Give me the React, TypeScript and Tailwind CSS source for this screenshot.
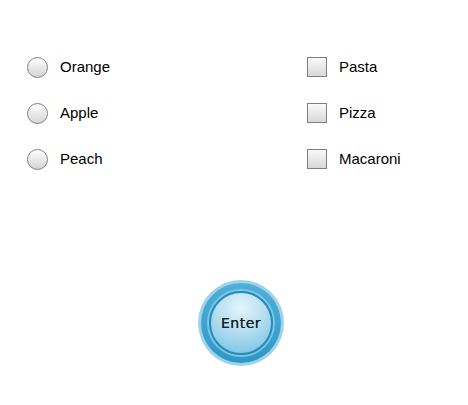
import { useState } from 'react';

const fruits = ['Orange', 'Apple', 'Peach'];
const foods = ['Pasta', 'Pizza', 'Macaroni'];

const Radio = ({ label, checked, onClick }: { label: string; checked: boolean; onClick: () => void }) => (
  <label className="flex h-[22px] cursor-pointer items-center gap-3" onClick={onClick}>
    <span className="flex h-[21px] w-[21px] items-center justify-center rounded-full border border-[#7f7f7f] bg-gradient-to-b from-[#ffffff] to-[#d4d4d4] shadow-[inset_0_1px_1px_rgba(255,255,255,0.9)]">
      {checked && <span className="h-[9px] w-[9px] rounded-full bg-[#333]" />}
    </span>
    <span className="text-[15px] text-black">{label}</span>
  </label>
);

const Checkbox = ({ label, checked, onClick }: { label: string; checked: boolean; onClick: () => void }) => (
  <label className="flex h-[22px] cursor-pointer items-center gap-3" onClick={onClick}>
    <span className="flex h-[20px] w-[20px] items-center justify-center border border-[#7f7f7f] bg-gradient-to-b from-[#fafafa] to-[#d8d8d8] text-[14px] leading-none text-[#333]">
      {checked && '✓'}
    </span>
    <span className="text-[15px] text-black">{label}</span>
  </label>
);

export default function App() {
  const [fruit, setFruit] = useState<string | null>(null);
  const [picked, setPicked] = useState<string[]>([]);

  const toggle = (f: string) =>
    setPicked(p => (p.includes(f) ? p.filter(x => x !== f) : [...p, f]));

  return (
    <div className="h-[405px] w-[468px] bg-white font-['Liberation_Sans',Arial,sans-serif]">
      <div className="flex pt-[56px] pl-[27px]">
        <div className="flex w-[280px] flex-col gap-6">
          {fruits.map(f => (
            <Radio key={f} label={f} checked={fruit === f} onClick={() => setFruit(f)} />
          ))}
        </div>
        <div className="flex flex-col gap-6">
          {foods.map(f => (
            <Checkbox key={f} label={f} checked={picked.includes(f)} onClick={() => toggle(f)} />
          ))}
        </div>
      </div>

      {/* the round Enter button */}
      <div className="mt-[110px] flex justify-center pl-[14px]">
        <button className="flex h-[86px] w-[86px] items-center justify-center rounded-full bg-[#9fd3ea] p-[3px]">
          <span className="flex h-full w-full items-center justify-center rounded-full bg-gradient-to-b from-[#4fb0d8] to-[#2f97c6]">
            <span className="flex h-[64px] w-[64px] items-center justify-center rounded-full border-[2px] border-[#2a8bb8] bg-[radial-gradient(circle_at_50%_25%,#e6f4fb_0%,#b6def0_45%,#6cbfe2_100%)] shadow-[0_0_0_2px_#7cc6e6]">
              <span className="font-['DejaVu_Sans',sans-serif] text-[14px] tracking-[0.5px] text-[#15232b] [text-shadow:0_0_0.4px_#15232b]">Enter</span>
            </span>
          </span>
        </button>
      </div>
    </div>
  );
}
